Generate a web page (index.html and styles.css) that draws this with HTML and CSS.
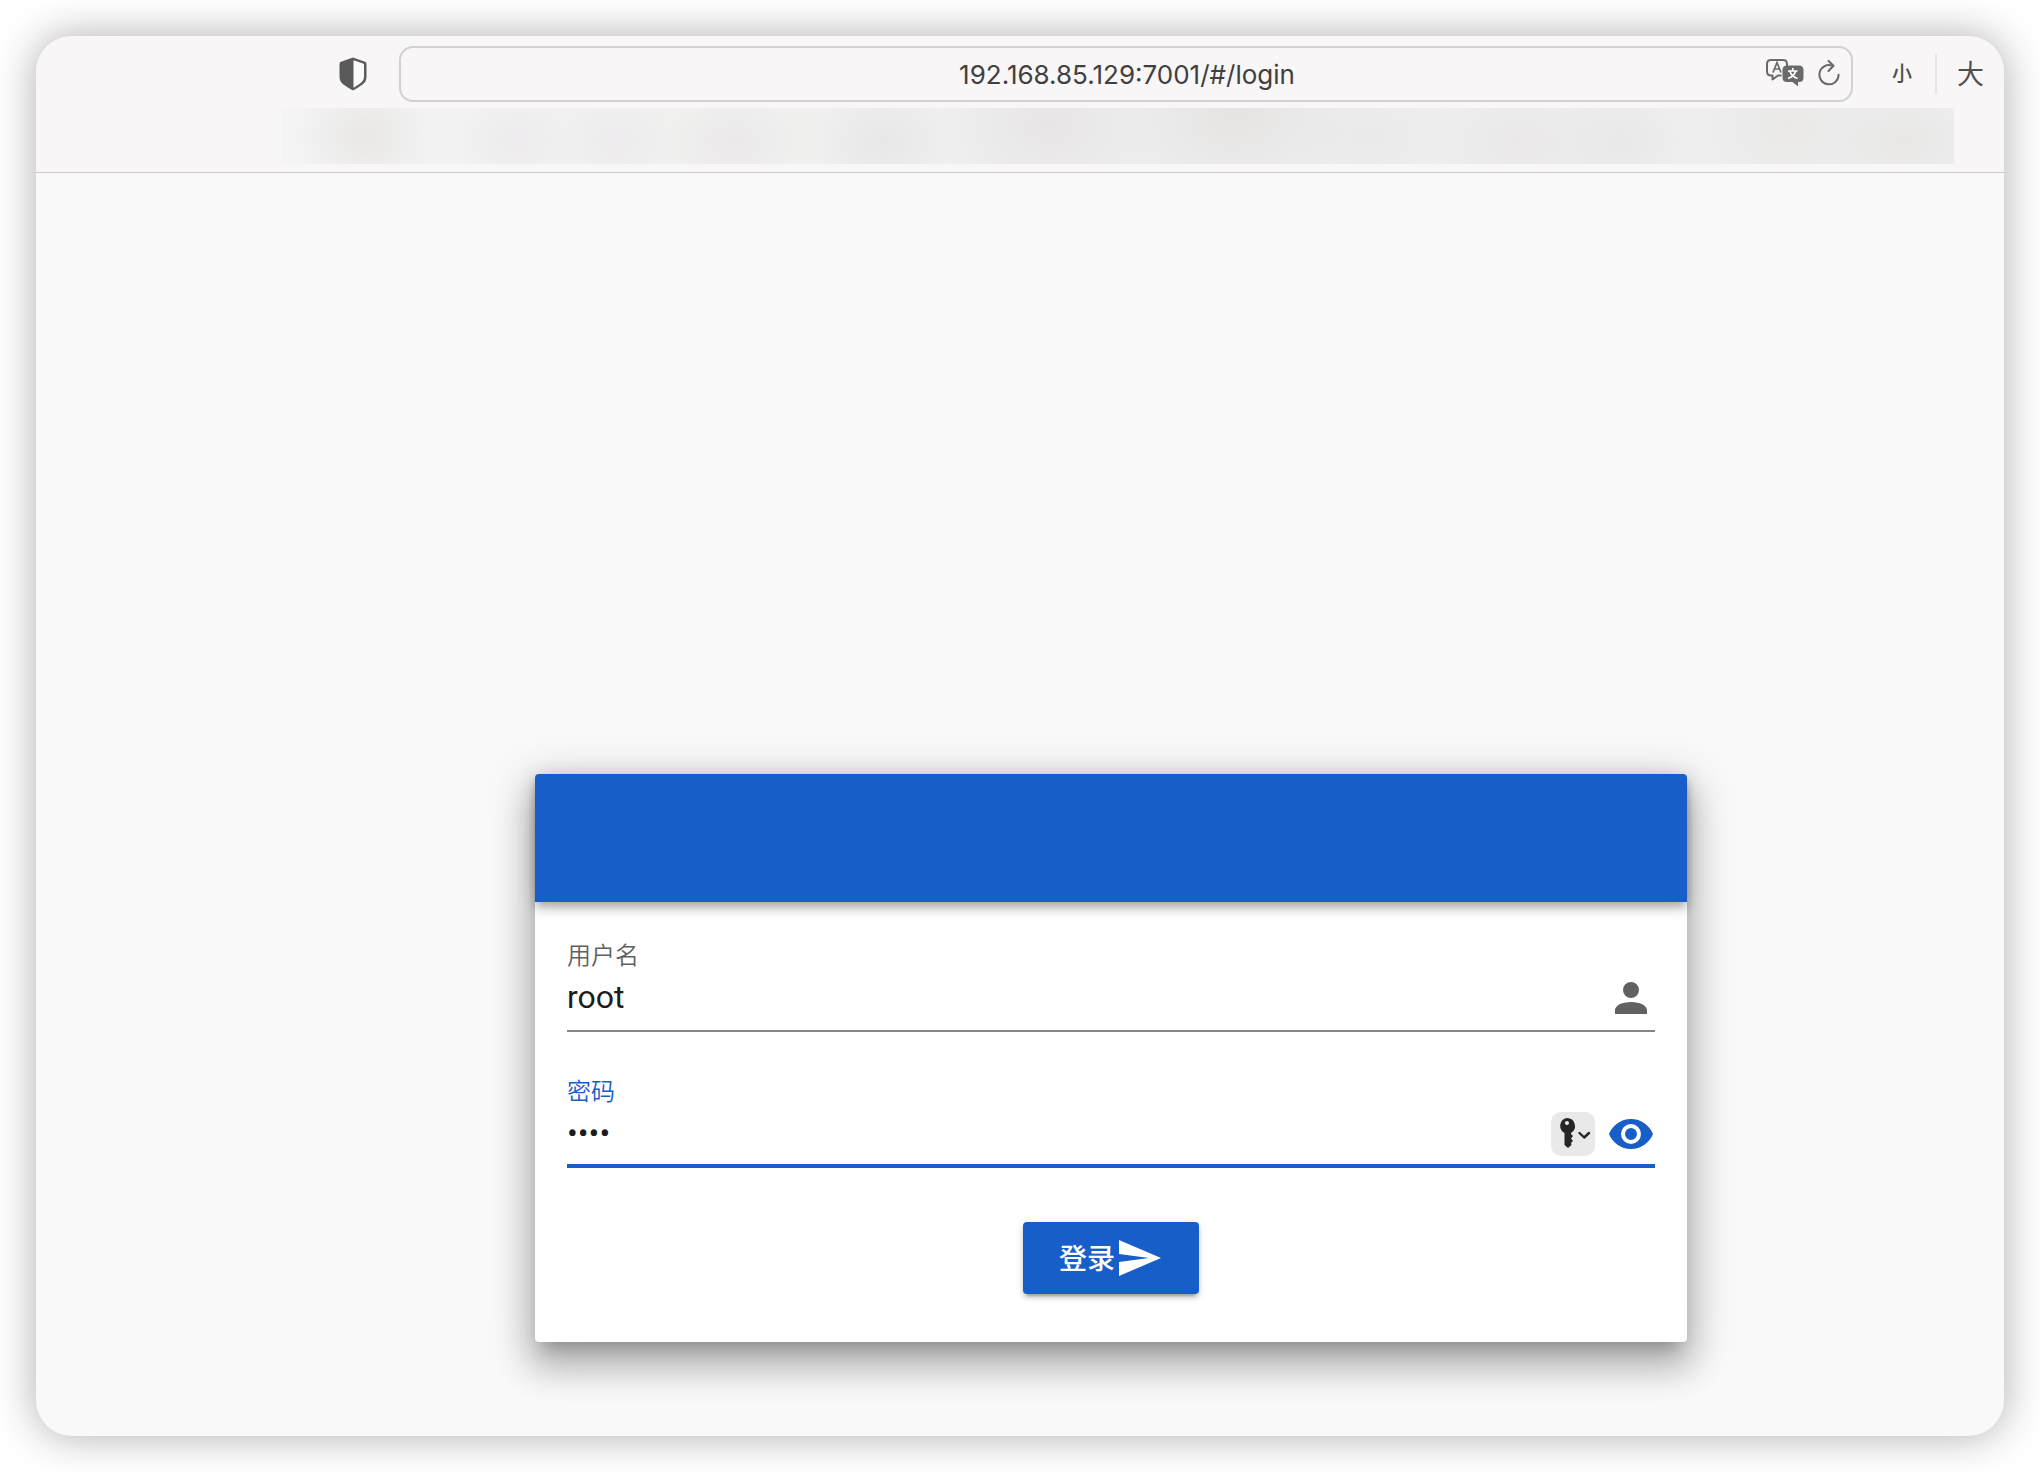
FILE: index.html
```html
<!DOCTYPE html>
<html lang="zh-CN">
<head>
    <meta charset="UTF-8">
    <meta name="viewport" content="width=device-width, initial-scale=1.0">
    <title>登录</title>
    <link rel="stylesheet" href="styles.css">
</head>
<body>
    <div class="window">
        <header class="toolbar">
            <div class="toolbar-row">
                <button class="icon-button" aria-label="隐私报告">
                    <svg width="28" height="34" viewBox="0 0 28 34">
                        <path d="M14 0.5 L26 4.8 Q27.5 5.4 27.5 7 V20 Q27.5 24.5 23.5 27.6 Q19 31 14 33.5 Q9 31 4.5 27.6 Q0.5 24.5 0.5 20 V7 Q0.5 5.4 2 4.8 Z" fill="#5a5a5a"/>
                        <path d="M14.5 3.2 L24 6.5 Q25 6.9 25 8 V20 Q25 23.5 22 25.8 Q18.5 28.6 14.5 30.7 Z" fill="#fbfafb"/>
                    </svg>
                </button>
                <div class="address">
                    <input class="address-input" type="text" aria-label="地址" value="192.168.85.129:7001/#/login">
                    <div class="address-tools">
                        <button class="icon-button" aria-label="翻译">
                            <svg width="38" height="28" viewBox="0 0 38 28">
                                <path d="M15.5 16.5 H12 L6.5 20.5 V16.5 H5 Q1 16.5 1 12.5 V5 Q1 1 5 1 H17 Q21 1 21 5 V7" fill="none" stroke="#6b6a6b" stroke-width="2" stroke-linejoin="round"/>
                                <path d="M7 13.5 L11 3.5 L15 13.5 M8.5 10 H13.5" fill="none" stroke="#6b6a6b" stroke-width="1.7"/>
                                <path d="M21 6.5 H33 Q37.5 6.5 37.5 11 V18.5 Q37.5 23 33 23 H32 V27.5 L26.5 23 H21 Q16.5 23 16.5 18.5 V11 Q16.5 6.5 21 6.5 Z" fill="#6b6a6b"/>
                                <path d="M26.8 9 V11.5 M22 12 H31.5 M24 12.5 Q25.5 17.5 31.5 19.5 M29.5 12.5 Q28 17.5 22 19.5" fill="none" stroke="#fff" stroke-width="1.7"/>
                            </svg>
                        </button>
                        <button class="icon-button" aria-label="重新载入">
                            <svg width="22" height="26" viewBox="0 0 22 26" fill="none" stroke="#6b6a6b" stroke-width="2" stroke-linecap="round" stroke-linejoin="round">
                                <path d="M14 5.6 A9.6 9.6 0 1 0 20.6 14.8"/>
                                <path d="M10.5 1 L15.5 5.8 L10.5 11"/>
                            </svg>
                        </button>
                    </div>
                </div>
                <div class="text-size">
                    <button class="text-smaller">小</button>
                    <button class="text-larger">大</button>
                </div>
            </div>
            <div class="favorites"></div>
        </header>
        <main class="page">
            <form class="card">
                <div class="card-header"></div>
                <div class="card-body">
                    <div class="field">
                        <label for="username">用户名</label>
                        <div class="field-row">
                            <input type="text" id="username" value="root">
                            <svg width="48" height="48" viewBox="0 0 24 24" fill="#616161">
                                <path d="M12 4a4 4 0 0 1 4 4 4 4 0 0 1-4 4 4 4 0 0 1-4-4 4 4 0 0 1 4-4m0 10c4.42 0 8 1.79 8 4v2H4v-2c0-2.21 3.58-4 8-4z"/>
                            </svg>
                        </div>
                    </div>
                    <div class="field active">
                        <label for="password">密码</label>
                        <div class="field-row">
                            <input type="password" id="password" value="root">
                            <button type="button" class="key-button" aria-label="密码自动填充">
                                <svg width="34" height="32" viewBox="0 0 34 32">
                                    <path fill-rule="evenodd" d="M10 0a8 8 0 0 1 4 14.9V16l2 2-2 2.5 2 2.5-2 2 .5 2-3.5 3-3.500-3V15A8 8 0 0 1 10 0zM10 3a2 2 0 1 0 .01 0z" fill="#262626"/>
                                    <path d="M22.5 15 L27.2 19.5 L32 15" fill="none" stroke="#262626" stroke-width="2.4" stroke-linecap="round" stroke-linejoin="round"/>
                                </svg>
                            </button>
                            <button type="button" class="icon-button" aria-label="显示密码">
                                <svg width="48" height="48" viewBox="0 0 24 24" fill="#185ec8">
                                    <path d="M12 9a3 3 0 0 0-3 3 3 3 0 0 0 3 3 3 3 0 0 0 3-3 3 3 0 0 0-3-3m0 8a5 5 0 0 1-5-5 5 5 0 0 1 5-5 5 5 0 0 1 5 5 5 5 0 0 1-5 5m0-12.5C7 4.5 2.73 7.61 1 12c1.73 4.39 6 7.5 11 7.5s9.27-3.11 11-7.5c-1.73-4.39-6-7.5-11-7.5z"/>
                                </svg>
                            </button>
                        </div>
                    </div>
                    <button type="submit" class="login-button">
                        <span>登录</span>
                        <svg width="48" height="48" viewBox="0 0 24 24" fill="#fff">
                            <path d="M2 3v7l15 2-15 2v7l21-9L2 3z"/>
                        </svg>
                    </button>
                </div>
            </form>
        </main>
    </div>
</body>
</html>
```
FILE: styles.css
```css
* {
    box-sizing: border-box;
}
body {
    margin: 0;
    padding: 36px;
    min-height: 100vh;
    display: flex;
    background: #fff;
    font-family: Roboto, "Noto Sans CJK SC", sans-serif;
}
button, input {
    font-family: inherit;
    border: none;
    outline: none;
    padding: 0;
    background: none;
}
button {
    cursor: pointer;
}
svg {
    display: block;
}

/* browser window */
.window {
    flex: 1;
    display: flex;
    flex-direction: column;
    border-radius: 36px;
    overflow: hidden;
    background: #f9f9f9;
    box-shadow: 0 0 44px rgba(0, 0, 0, 0.32);
}
.toolbar {
    background: #f8f6f7;
    border-bottom: 1px solid #c9c8c9;
    padding: 10px 0 8px 303px;
}
.toolbar-row {
    display: flex;
    align-items: center;
}
.address {
    flex: 1;
    display: flex;
    align-items: center;
    height: 56px;
    margin-left: 32px;
    padding: 0 11px;
    border: 2px solid #d2d0d1;
    border-radius: 14px;
}
.address-input {
    flex: 1;
    min-width: 0;
    padding-left: 76px;
    text-align: center;
    font-family: Inter, sans-serif;
    font-size: 26px;
    color: #404040;
}
.address-tools {
    display: flex;
    align-items: center;
    gap: 14px;
    padding-bottom: 2px;
}
.text-size {
    display: flex;
    align-items: center;
    margin-left: 34px;
}
.text-size button {
    padding-bottom: 4px;
    color: #505050;
}
.text-size .text-smaller {
    width: 50px;
    height: 40px;
    padding-right: 18px;
    border-right: 2px solid #e6e4e5;
    font-size: 20px;
    font-weight: 500;
}
.text-larger {
    width: 67px;
    font-size: 27px;
}
.favorites {
    height: 56px;
    margin: 6px 50px 0 -58px;
    background:
        radial-gradient(70px 60px at 5% 50%, #e8e7e6, transparent),
        radial-gradient(60px 50px at 14% 60%, #edebed, transparent),
        radial-gradient(60px 50px at 20% 60%, #edebed, transparent),
        radial-gradient(70px 50px at 27% 60%, #ebe9e9, transparent),
        radial-gradient(70px 56px at 36% 60%, #e7e7e7, transparent),
        radial-gradient(110px 80px at 46% 30%, #e7e5e5, transparent),
        radial-gradient(120px 90px at 57% 10%, #e5e4e3, transparent),
        radial-gradient(90px 60px at 65% 50%, #ebeaea, transparent),
        radial-gradient(100px 60px at 74% 60%, #eae8e8, transparent),
        radial-gradient(70px 60px at 80% 60%, #e9e8e8, transparent),
        radial-gradient(100px 80px at 90% 30%, #eae9e8, transparent),
        radial-gradient(90px 60px at 97% 60%, #e8e7e6, transparent),
        linear-gradient(to right, #f5f4f4, #f1f1f0 20%, #efeeee 50%, #efefef);
}

/* login page */
.page {
    flex: 1;
    display: flex;
    justify-content: center;
    align-items: flex-end;
    padding: 0 0 94px 182px;
}
.card {
    width: 1152px;
    border-radius: 4px;
    background: #fff;
    box-shadow: 0 14px 16px -8px rgba(0, 0, 0, 0.2), 0 24px 34px 4px rgba(0, 0, 0, 0.18), 0 10px 44px 8px rgba(0, 0, 0, 0.16);
}
.card-header {
    height: 128px;
    border-radius: 4px 4px 0 0;
    background: #185ec8;
    box-shadow: 0 4px 8px -2px rgba(0, 0, 0, 0.2), 0 8px 10px rgba(0, 0, 0, 0.14), 0 2px 20px rgba(0, 0, 0, 0.12);
}
.card-body {
    display: flex;
    flex-direction: column;
    padding: 36px 32px 48px;
}
.field {
    height: 94px;
    margin-bottom: 42px;
    border-bottom: 2px solid #858585;
}
.field.active {
    margin-bottom: 54px;
    border-bottom: 4px solid #185ec8;
}
.field label {
    display: block;
    height: 36px;
    line-height: 36px;
    font-size: 24px;
    font-weight: 350;
    color: #606060;
}
.field.active label {
    color: #185ec8;
}
.field-row {
    display: flex;
    align-items: center;
    height: 48px;
}
.field-row input {
    flex: 1;
    min-width: 0;
    padding-bottom: 2px;
    font-size: 32px;
    color: #1c1c1c;
}
.key-button {
    display: flex;
    align-items: center;
    width: 44px;
    height: 44px;
    margin-right: 12px;
    padding-left: 6px;
    border-radius: 10px;
    background: #e9e9e9;
}
.login-button {
    display: flex;
    align-items: center;
    align-self: center;
    height: 72px;
    padding: 0 36px;
    border-radius: 4px;
    background: #185ec8;
    color: #fff;
    font-size: 28px;
    font-weight: 500;
    box-shadow: 0 6px 2px -4px rgba(0, 0, 0, 0.2), 0 4px 4px rgba(0, 0, 0, 0.14), 0 2px 10px rgba(0, 0, 0, 0.12);
}
.login-button span {
    padding-bottom: 2px;
}
```
